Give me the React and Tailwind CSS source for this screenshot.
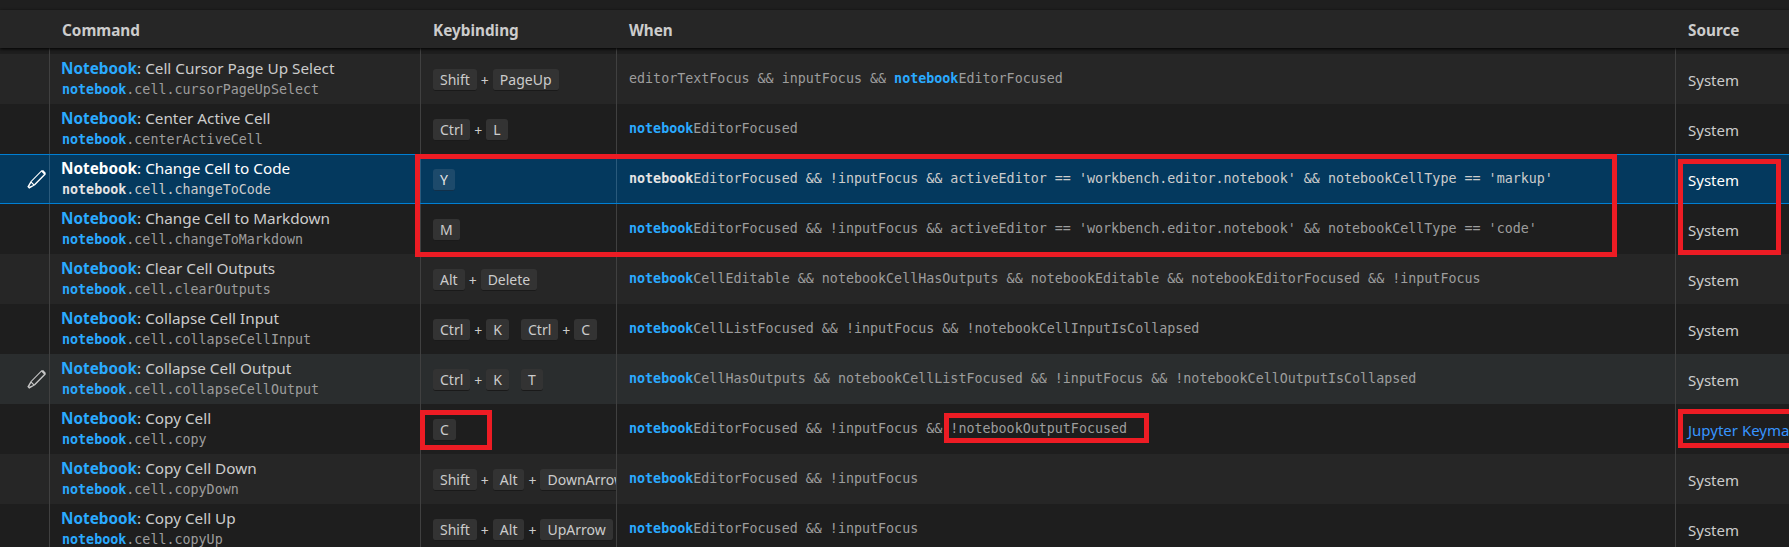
import React from "react";

const sans = "font-['Noto_Sans',sans-serif]";
const mono = "font-['DejaVu_Sans_Mono',monospace]";

const rows = [
  { title: "Cell Cursor Page Up Select", id: ".cell.cursorPageUpSelect", keys: [["Shift", "PageUp"]], when: [["editorTextFocus && inputFocus && "], ["notebook", true], ["EditorFocused"]], bg: "bg-[#262626]" },
  { title: "Center Active Cell", id: ".centerActiveCell", keys: [["Ctrl", "L"]], when: [["notebook", true], ["EditorFocused"]], bg: "bg-[#1e1e1e]" },
  { title: "Change Cell to Code", id: ".cell.changeToCode", keys: [["Y"]], when: [["notebook", true], ["EditorFocused && !inputFocus && activeEditor == 'workbench.editor.notebook' && notebookCellType == 'markup'"]], selected: true, edit: true },
  { title: "Change Cell to Markdown", id: ".cell.changeToMarkdown", keys: [["M"]], when: [["notebook", true], ["EditorFocused && !inputFocus && activeEditor == 'workbench.editor.notebook' && notebookCellType == 'code'"]], bg: "bg-[#1e1e1e]" },
  { title: "Clear Cell Outputs", id: ".cell.clearOutputs", keys: [["Alt", "Delete"]], when: [["notebook", true], ["CellEditable && notebookCellHasOutputs && notebookEditable && notebookEditorFocused && !inputFocus"]], bg: "bg-[#262626]" },
  { title: "Collapse Cell Input", id: ".cell.collapseCellInput", keys: [["Ctrl", "K"], ["Ctrl", "C"]], when: [["notebook", true], ["CellListFocused && !inputFocus && !notebookCellInputIsCollapsed"]], bg: "bg-[#1e1e1e]" },
  { title: "Collapse Cell Output", id: ".cell.collapseCellOutput", keys: [["Ctrl", "K"], ["T"]], when: [["notebook", true], ["CellHasOutputs && notebookCellListFocused && !inputFocus && !notebookCellOutputIsCollapsed"]], bg: "bg-[#2a2d2e]", edit: true },
  { title: "Copy Cell", id: ".cell.copy", keys: [["C"]], when: [["notebook", true], ["EditorFocused && !inputFocus && !notebookOutputFocused"]], bg: "bg-[#1e1e1e]", source: "Jupyter Keymap" },
  { title: "Copy Cell Down", id: ".cell.copyDown", keys: [["Shift", "Alt", "DownArrow"]], when: [["notebook", true], ["EditorFocused && !inputFocus"]], bg: "bg-[#262626]" },
  { title: "Copy Cell Up", id: ".cell.copyUp", keys: [["Shift", "Alt", "UpArrow"]], when: [["notebook", true], ["EditorFocused && !inputFocus"]], bg: "bg-[#1e1e1e]" },
];

const gridCols = "grid grid-cols-[49px_371px_196px_1059px_114px]";

const EditIcon = ({ selected }) => (
  <svg width="21" height="21" viewBox="0 0 16 16" fill={selected ? "#ffffff" : "#c5c5c5"}>
    <path fillRule="evenodd" clipRule="evenodd" d="M13.23 1h-1.46L3.52 9.25l-.16.22L1 13.59 2.41 15l4.12-2.36.22-.16L15 4.23V2.77L13.23 1zM2.41 13.59l1.51-3 1.56 1.56-3.07 1.44zm3.77-2.05L4.27 9.63l7.5-7.5 1.91 1.91-7.5 7.5z" />
  </svg>
);

const Keycap = ({ label, selected }) => (
  <span className={`shrink-0 h-[22px] px-[7px] flex items-center rounded-[3px] border-b text-[14px] ${selected ? "bg-[#1d4a6b] border-[#123049] text-[#e4e4e4]" : "bg-[#333333] border-[#1a1a1a] text-[#cccccc]"}`}>
    {label}
  </span>
);

const Row = ({ row }) => {
  const { selected } = row;
  const cell = `border-l ${selected ? "border-[#2a5a7c]" : "border-[#404040]"}`;
  const text = selected ? "text-white" : "text-[#cccccc]";
  const dim = selected ? "text-[#cccccc]" : "text-[#9d9d9d]";
  const hl = selected ? "text-[#e4e4e4]" : "text-[#2aaaff]";
  return (
    <div className={`${gridCols} h-[50px] ${selected ? "bg-[#04395e] border-y border-[#007fd4]" : row.bg}`}>
      <div className="flex items-center justify-end pr-[2px]">
        {row.edit && <EditIcon selected={selected} />}
      </div>
      <div className={`${cell} pl-[12px] flex flex-col justify-center overflow-hidden whitespace-nowrap`}>
        <div className={`text-[15.3px] leading-[21px] -ml-[1px] ${text}`}>
          <b className={selected ? "text-white" : "text-[#2aaaff]"}>Notebook</b>: {row.title}
        </div>
        <div className={`${mono} text-[13.35px] leading-[21px] ${dim}`}>
          <b className={hl}>notebook</b>{row.id}
        </div>
      </div>
      <div className={`${cell} pl-[12px] pt-[2px] flex items-center gap-[12px] overflow-hidden`}>
        {row.keys.map((chord, i) => (
          <div key={i} className="flex items-center gap-[4px] shrink-0">
            {chord.map((k, j) => (
              <React.Fragment key={k}>
                {j > 0 && <span className={`text-[14px] ${text}`}>+</span>}
                <Keycap label={k} selected={selected} />
              </React.Fragment>
            ))}
          </div>
        ))}
      </div>
      <div className={`${cell} pl-[12px] flex items-center overflow-hidden whitespace-nowrap ${mono} text-[13.35px] ${dim}`}>
        <span>
          {row.when.map(([part, isHl], i) =>
            isHl ? <b key={i} className={hl}>{part}</b> : <span key={i}>{part}</span>
          )}
        </span>
      </div>
      <div className={`${cell} pl-[12px] pt-[2px] flex items-center overflow-hidden whitespace-nowrap text-[15px] ${row.source ? "text-[#3794ff]" : text}`}>
        {row.source || "System"}
      </div>
    </div>
  );
};

// red annotation boxes drawn on top of the screenshot
const RedBox = ({ className }) => (
  <div className={`absolute border-[5px] border-[#ed1c24] ${className}`} />
);

export default function App() {
  return (
    <div className={`relative w-[1789px] h-[547px] overflow-hidden bg-[#1e1e1e] ${sans}`}>
      <div className="h-[10px] bg-[#1f1f1f]" />
      <div className={`${gridCols} relative h-[38px] pt-[2px] bg-[#262626] shadow-[0_1px_3px_#000000] text-[15.3px] font-bold text-[#cccccc] items-center`}>
        <div />
        <div className="pl-[13px]">Command</div>
        <div className="pl-[13px]">Keybinding</div>
        <div className="pl-[13px]">When</div>
        <div className="pl-[13px]">Source</div>
      </div>
      <div className={`${gridCols} h-[6px]`}>
        <div />
        <div className="border-l border-[#404040]" />
        <div className="border-l border-[#404040]" />
        <div className="border-l border-[#404040]" />
        <div className="border-l border-[#404040]" />
      </div>
      {rows.map((row) => (
        <Row key={row.id} row={row} />
      ))}
      <RedBox className="left-[415px] top-[154px] w-[1202px] h-[103px]" />
      <RedBox className="left-[1678px] top-[159px] w-[103px] h-[96px]" />
      <RedBox className="left-[420px] top-[410px] w-[72px] h-[40px]" />
      <RedBox className="left-[944px] top-[413px] w-[205px] h-[30px]" />
      <RedBox className="left-[1678px] top-[409px] w-[130px] h-[39px]" />
    </div>
  );
}
